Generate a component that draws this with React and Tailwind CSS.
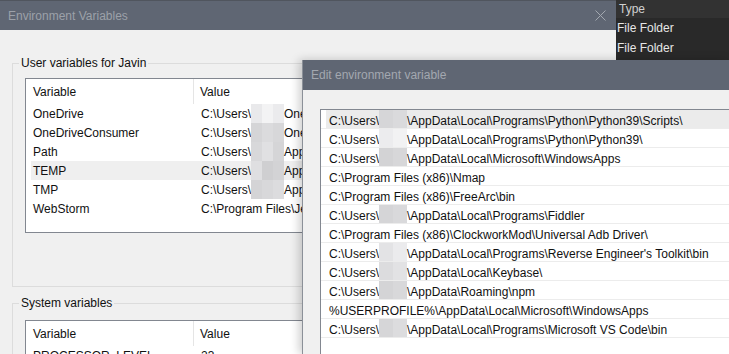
import React from "react";

const userVars = [
  { name: "OneDrive", pre: "C:\\Users\\", post: "One", blur: ["#e9e9eb", "#f3f3f4", "#ebebed"] },
  { name: "OneDriveConsumer", pre: "C:\\Users\\", post: "One", blur: ["#d5d5d7", "#dbdbdd", "#d7d7d9"] },
  { name: "Path", pre: "C:\\Users\\", post: "App", blur: ["#d8d8da", "#e0e0e2", "#d5d5d7"] },
  { name: "TEMP", pre: "C:\\Users\\", post: "App", blur: ["#dfdfe1", "#cfcfd1", "#d3d3d5"] },
  { name: "TMP", pre: "C:\\Users\\", post: "App", blur: ["#d4d4d6", "#d8d8da", "#dcdcde"] },
  { name: "WebStorm", pre: "C:\\Program Files\\JetBrains\\WebStorm", post: null },
];

const paths = [
  { blur: ["#d6d6d8", "#dadadc"], text: "\\AppData\\Local\\Programs\\Python\\Python39\\Scripts\\" },
  { blur: ["#ececee", "#f2f2f3"], text: "\\AppData\\Local\\Programs\\Python\\Python39\\" },
  { blur: ["#d3d3d5", "#d7d7d9"], text: "\\AppData\\Local\\Microsoft\\WindowsApps" },
  { plain: "C:\\Program Files (x86)\\Nmap" },
  { plain: "C:\\Program Files (x86)\\FreeArc\\bin" },
  { blur: ["#d5d5d7", "#d9d9db"], text: "\\AppData\\Local\\Programs\\Fiddler" },
  { plain: "C:\\Program Files (x86)\\ClockworkMod\\Universal Adb Driver\\" },
  { blur: ["#e3e3e5", "#ebebed"], text: "\\AppData\\Local\\Programs\\Reverse Engineer's Toolkit\\bin" },
  { blur: ["#dcdcde", "#e2e2e4"], text: "\\AppData\\Local\\Keybase\\" },
  { blur: ["#d4d4d6", "#d8d8da"], text: "\\AppData\\Roaming\\npm" },
  { plain: "%USERPROFILE%\\AppData\\Local\\Microsoft\\WindowsApps" },
  { blur: ["#d6d6d8", "#dcdcde"], text: "\\AppData\\Local\\Programs\\Microsoft VS Code\\bin" },
];

function CloseX() {
  return (
    <svg width="11" height="11" viewBox="0 0 11 11" className="shrink-0">
      <path d="M0.5 0.5 L10.5 10.5 M10.5 0.5 L0.5 10.5" stroke="#a3a8b0" strokeWidth="1" fill="none" />
    </svg>
  );
}

function Blur({ colors, cell }) {
  return (
    <span className="inline-flex self-stretch shrink-0">
      {colors.map((c, i) => (
        <span key={i} className={cell} style={{ backgroundColor: c }} />
      ))}
    </span>
  );
}

function ListHeader() {
  return (
    <div className="flex h-[25px] items-center shrink-0">
      <div className="w-[168px] h-full flex items-center pl-[7px] border-r border-[#e5e5e5]">Variable</div>
      <div className="pl-[6px]">Value</div>
    </div>
  );
}

export default function App() {
  return (
    <div className="relative w-[729px] h-[354px] overflow-hidden bg-[#f0f0f0] text-[12px] leading-none text-[#111] font-['Liberation_Sans',Arial,sans-serif]">
      {/* Main window */}
      <div className="flex flex-col w-[616px] h-full">
        <div className="h-[30px] shrink-0 bg-[#5f6673] border-t border-[#50555e] flex items-center justify-between pl-2 pr-[10px] text-[#9ca1a9]">
          <span>Environment Variables</span>
          <CloseX />
        </div>
        <div className="flex flex-col px-3 pt-[25px]">
          <fieldset className="border border-[#dcdcdc] h-[232px] flex flex-col">
            <legend className="ml-[6px] px-[2px] leading-[16px]">User variables for Javin</legend>
            <div className="mx-3 mt-[7px] h-[155px] border border-[#828790] bg-white flex flex-col">
              <ListHeader />
              <div className="flex flex-col px-[5px]">
                {userVars.map((v) => (
                  <div key={v.name} className={`flex h-[19px] items-stretch ${v.name === "TEMP" ? "bg-[#efefef]" : ""}`}>
                    <div className="w-[170px] pl-[2px] pt-[1px] flex items-center">{v.name}</div>
                    <div className="flex items-stretch whitespace-nowrap">
                      <span className="pt-[1px] flex items-center">{v.pre}</span>
                      {v.post && <Blur colors={v.blur} cell="w-[11px]" />}
                      {v.post && <span className="pt-[1px] flex items-center">{v.post}dri</span>}
                    </div>
                  </div>
                ))}
              </div>
            </div>
          </fieldset>
          <fieldset className="mt-[8px] border border-[#dcdcdc] h-[120px] flex flex-col">
            <legend className="ml-[6px] px-[2px] leading-[16px]">System variables</legend>
            <div className="mx-3 mt-[9px] h-[155px] border border-[#828790] bg-white flex flex-col">
              <ListHeader />
              <div className="flex h-[19px] items-center px-[5px]">
                <div className="w-[170px] pl-[2px]">PROCESSOR_LEVEL</div>
                <div>23</div>
              </div>
            </div>
          </fieldset>
        </div>
      </div>

      {/* Explorer details pane behind */}
      <div className="absolute left-[616px] top-0 w-[113px] h-[60px] bg-[#292929] text-[#e6e6e6] flex flex-col">
        <div className="h-[18px] bg-[#323232] flex items-center pl-[3px] text-[#d0d0d0]">Type</div>
        <div className="h-[20px] flex items-center pl-[1px]">File Folder</div>
        <div className="h-[19px] flex items-center pl-[1px]">File Folder</div>
      </div>

      {/* Edit environment variable dialog */}
      <div className="absolute left-[302px] top-[60px] right-0 bottom-0 flex flex-col border-l border-[#8b9098] shadow-[-3px_0_9px_rgba(0,0,0,0.2)]">
        <div className="h-[30px] shrink-0 bg-[#5f6673] flex items-center pl-2 text-[#a3a8b0]">
          Edit environment variable
        </div>
        <div className="flex-1 bg-[#f0f0f0] pl-[17px] pt-[19px]">
          <div className="h-full border-l border-t border-[#828790] bg-white flex flex-col">
            {paths.map((p, i) => (
              <div key={i} className="h-[19px] shrink-0 border-b border-[#ececec] flex">
                <div className={`flex-1 ml-[5px] pl-[3px] flex items-stretch whitespace-nowrap ${i === 0 ? "bg-[#ebebeb]" : ""}`}>
                  {p.plain ? (
                    <span className="pt-[4px] flex items-center">{p.plain}</span>
                  ) : (
                    <>
                      <span className="pt-[4px] flex items-center">C:\Users\</span>
                      <Blur colors={p.blur} cell="w-[14px]" />
                      <span className="pt-[4px] flex items-center">{p.text}</span>
                    </>
                  )}
                </div>
              </div>
            ))}
          </div>
        </div>
      </div>
    </div>
  );
}
